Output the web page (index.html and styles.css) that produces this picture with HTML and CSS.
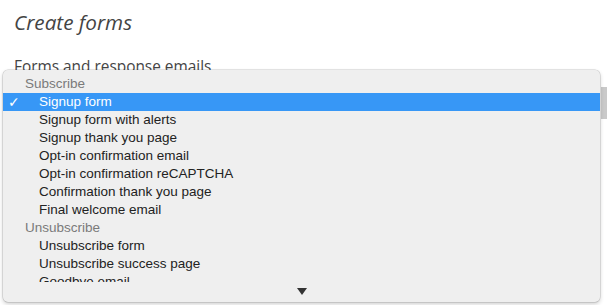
FILE: index.html
```html
<!DOCTYPE html>
<html>
<head>
<meta charset="utf-8">
<link rel="stylesheet" href="styles.css">
</head>
<body>
<div class="page">
  <h1 class="title">Create forms</h1>
  <h2 class="subtitle">Forms and response emails</h2>
</div>
<div class="scroll-thumb"></div>
<div class="menu">
  <div class="list">
    <div class="group">Subscribe</div>
    <div class="item selected"><span class="check">✓</span>Signup form</div>
    <div class="item">Signup form with alerts</div>
    <div class="item">Signup thank you page</div>
    <div class="item">Opt-in confirmation email</div>
    <div class="item">Opt-in confirmation reCAPTCHA</div>
    <div class="item">Confirmation thank you page</div>
    <div class="item">Final welcome email</div>
    <div class="group">Unsubscribe</div>
    <div class="item">Unsubscribe form</div>
    <div class="item">Unsubscribe success page</div>
    <div class="item">Goodbye email</div>
  </div>
  <div class="more">
    <svg width="10" height="7" viewBox="0 0 10 7"><polygon points="0,0 10,0 5,7" fill="#333"/></svg>
  </div>
</div>
</body>
</html>
```

FILE: styles.css
```css
html, body {
  margin: 0;
  padding: 0;
  background: #fff;
}
body {
  width: 607px;
  height: 305px;
  overflow: hidden;
  position: relative;
}
.page {
  padding: 8px 14px 0;
  font-family: "Open Sans", sans-serif;
  color: #444;
}
.title {
  margin: 0;
  font-size: 20.7px;
  font-style: italic;
  font-weight: 400;
  line-height: 28px;
}
.subtitle {
  margin: 21px 0 0;
  font-size: 15.4px;
  font-weight: 400;
  line-height: 20px;
}
.scroll-thumb {
  position: absolute;
  left: 601px;
  top: 87px;
  width: 6px;
  height: 32px;
  background: #c9c9c9;
}
.menu {
  position: absolute;
  left: 3px;
  top: 70px;
  width: 597px;
  height: 232px;
  background: #efefef;
  border-radius: 5px;
  box-shadow: 0 0 0 0.5px rgba(0,0,0,0.18), 0 2px 4px rgba(0,0,0,0.2);
  font-family: "Liberation Sans", Arial, sans-serif;
  font-size: 13.5px;
  display: flex;
  flex-direction: column;
  padding-top: 5px;
  box-sizing: border-box;
}
.list {
  height: 207px;
  overflow: hidden;
}
.group, .item {
  height: 18px;
  line-height: 18px;
  white-space: nowrap;
}
.group {
  padding-left: 22px;
  color: #7a7a7a;
}
.item {
  padding-left: 36px;
  color: #222;
  position: relative;
}
.item.selected {
  background: #3797f6;
  color: #fff;
}
.check {
  position: absolute;
  left: 5px;
  top: 0;
  font-family: "DejaVu Sans", sans-serif;
  font-size: 14px;
  font-weight: bold;
}
.more {
  flex: 1;
  display: flex;
  justify-content: center;
  padding-top: 6px;
}
```
